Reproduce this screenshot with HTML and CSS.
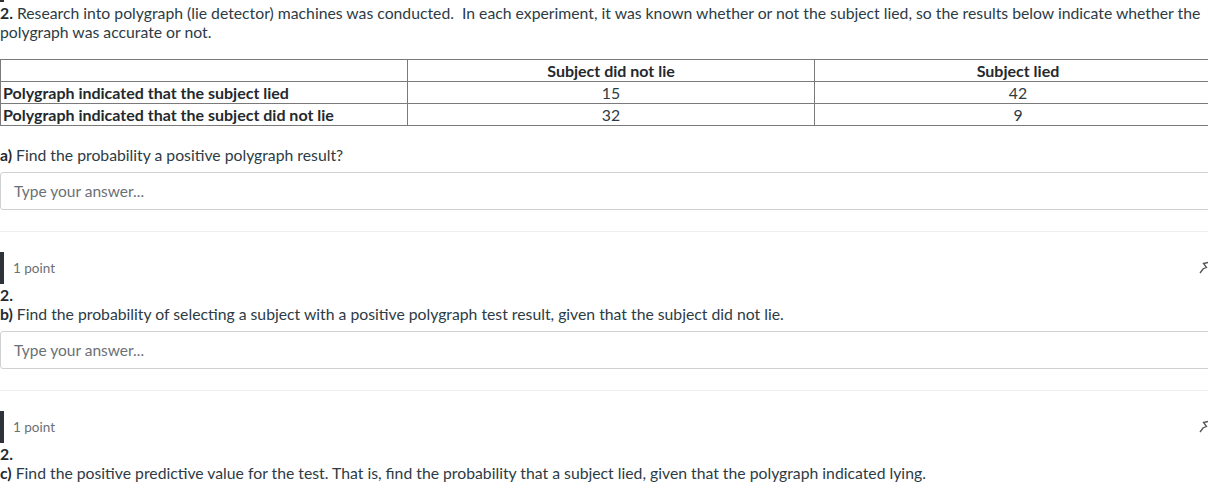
FILE: index.html
```html
<!DOCTYPE html>
<html>
<head>
<meta charset="utf-8">
<link rel="stylesheet" href="styles.css">
</head>
<body>
<div class="page">
  <div class="prev-bar"></div>
  <div class="question">
    <p class="intro"><b>2.</b> Research into polygraph (lie detector) machines was conducted.&nbsp; In each experiment, it was known whether or not the subject lied, so the results below indicate whether the polygraph was accurate or not.</p>
    <table class="data">
      <tr><th class="label"></th><th>Subject did not lie</th><th>Subject lied</th></tr>
      <tr><th class="label">Polygraph indicated that the subject lied</th><td>15</td><td>42</td></tr>
      <tr><th class="label">Polygraph indicated that the subject did not lie</th><td>32</td><td>9</td></tr>
    </table>
    <p class="prompt first"><b>a)</b> Find the probability a positive polygraph result?</p>
    <div class="answer">Type your answer...</div>
  </div>

  <div class="question bordered">
    <div class="meta">
      <div class="bar"></div>
      <span class="points">1 point</span>
      <svg class="flag" width="10" height="14" viewBox="0 0 10 14"><path d="M9 1.5 L4.5 2.5 L7.5 6.5 L3.5 8 M4.5 7.5 L1 12" fill="none" stroke="#555" stroke-width="1.3"/></svg>
    </div>
    <p class="num">2.</p>
    <p class="prompt"><b>b)</b> Find the probability of selecting a subject with a positive polygraph test result, given that the subject did not lie.</p>
    <div class="answer">Type your answer...</div>
  </div>

  <div class="question bordered">
    <div class="meta">
      <div class="bar"></div>
      <span class="points">1 point</span>
      <svg class="flag" width="10" height="14" viewBox="0 0 10 14"><path d="M9 1.5 L4.5 2.5 L7.5 6.5 L3.5 8 M4.5 7.5 L1 12" fill="none" stroke="#555" stroke-width="1.3"/></svg>
    </div>
    <p class="num">2.</p>
    <p class="prompt"><b>c)</b> Find the positive predictive value for the test. That is, find the probability that a subject lied, given that the polygraph indicated lying.</p>
  </div>
</div>
</body>
</html>
```
FILE: styles.css
```css
html, body {
  margin: 0;
  padding: 0;
  background: #fff;
  overflow: hidden;
}
body {
  width: 1208px;
  height: 486px;
  font-family: Lato, "Open Sans", sans-serif;
  color: #2d3b45;
  font-size: 15.75px;
}
.page {
  width: 1222px;
  position: relative;
}
.prev-bar {
  width: 4px;
  height: 2px;
  background: #2d3339;
}
p { margin: 0; }
b { font-weight: 700; color: #24292e; }
.intro {
  line-height: 19px;
  padding-top: 1px;
}
.data {
  border-collapse: collapse;
  width: 1222px;
  margin-top: 18px;
  table-layout: fixed;
}
.data th, .data td {
  border: 1px solid #7a7a7a;
  height: 21px;
  padding: 0 2px;
  line-height: 20px;
  text-align: center;
  font-size: 15.75px;
}
.data th { font-weight: 700; color: #24292e; font-size: 16px; }
.data td { color: #2d3b45; }
.data th.label { text-align: left; }
.prompt {
  line-height: 20px;
}
.prompt.first {
  margin-top: 19px;
}
.answer {
  margin-top: 7px;
  border: 1px solid #cfd2d4;
  border-radius: 3px;
  color: #6b7075;
  padding-left: 13px;
  line-height: 36px;
  box-sizing: border-box;
  height: 38px;
  font-size: 15.5px;
}
.question { padding-bottom: 21px; }
.bordered {
  border-top: 1px solid #eceeef;
  padding-top: 20px;
}
.meta {
  display: flex;
  align-items: center;
  height: 32px;
  position: relative;
}
.bar {
  width: 4px;
  height: 32px;
  background: #2d3339;
}
.points {
  font-size: 13.5px;
  color: #6b7075;
  margin-left: 9px;
  flex: 1;
}
.flag {
  position: absolute;
  left: 1199px;
  top: 9px;
}
.num {
  font-weight: 700;
  color: #24292e;
  line-height: 18px;
  margin-top: 2px;
}
```
